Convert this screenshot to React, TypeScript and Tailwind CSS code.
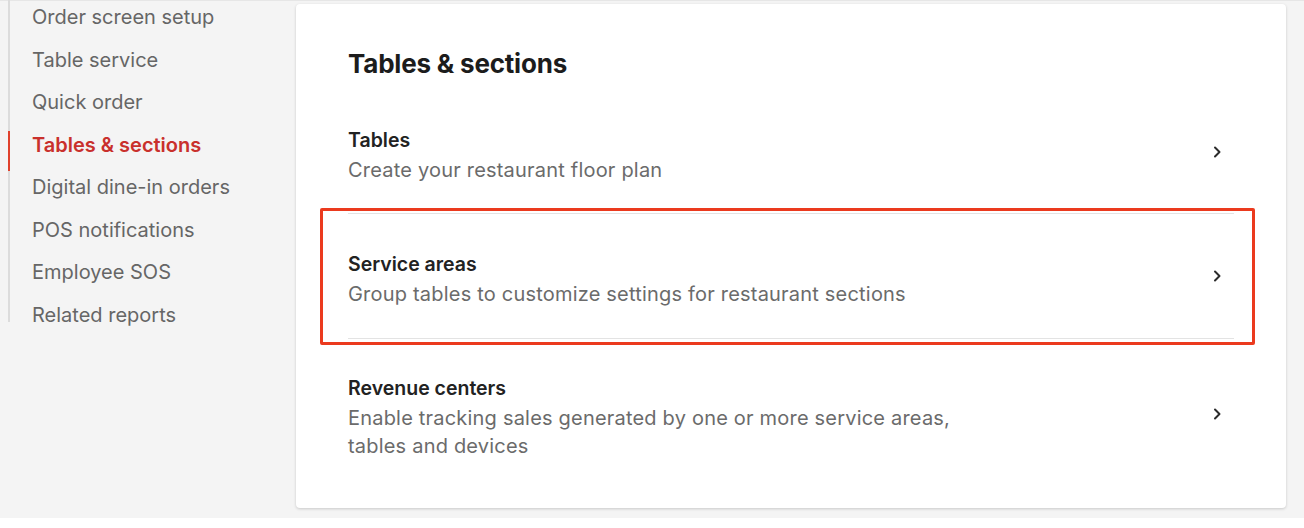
import React from 'react';

const navItems = [
  'Order screen setup',
  'Table service',
  'Quick order',
  'Tables & sections',
  'Digital dine-in orders',
  'POS notifications',
  'Employee SOS',
  'Related reports',
];

const rows = [
  { title: 'Tables', desc: ['Create your restaurant floor plan'] },
  { title: 'Service areas', desc: ['Group tables to customize settings for restaurant sections'], marked: true },
  {
    title: 'Revenue centers',
    desc: ['Enable tracking sales generated by one or more service areas,', 'tables and devices'],
  },
];

function Chevron() {
  return (
    <svg width="16" height="16" viewBox="0 0 16 16" fill="none" className="mr-[9px] mb-[6px] shrink-0">
      <path d="M6 3.5 L10.5 8 L6 12.5" stroke="#2b2b2b" strokeWidth="2" strokeLinecap="round" strokeLinejoin="round" />
    </svg>
  );
}

export default function App() {
  return (
    <div className="w-[1304px] h-[528px] bg-white overflow-hidden font-['Inter',sans-serif]">
      <div className="h-[518px] bg-[#f4f4f4] flex border-t border-[#e6e6e6]">
        <nav className="w-[296px] shrink-0 pl-2">
          <ul className="h-[326px] border-l-2 border-[#dcdcdc] -mt-[5px]">
            {navItems.map((item) => {
              const active = item === 'Tables & sections';
              return (
                <li key={item} className="relative h-[42.5px] flex items-center pl-[22px]">
                  {active && <span className="absolute -left-[2px] top-[7px] h-[40px] w-[2px] bg-[#e0412c]" />}
                  <span
                    className={
                      active
                        ? 'text-[20px] font-semibold text-[#c9302c]'
                        : 'text-[20px] text-[#666666]'
                    }
                  >
                    {item}
                  </span>
                </li>
              );
            })}
          </ul>
        </nav>

        <div className="flex-1 mr-[18px] mt-[3px] mb-[10px] bg-white rounded-[4px] shadow-[0_1px_3px_rgba(0,0,0,0.18)] pl-[52px] pr-[52px] pt-[44px]">
          <h1 className="text-[26px] leading-[32px] font-bold text-[#1c1c1c] tracking-[-0.2px]">Tables &amp; sections</h1>
          <div className="mt-[10px]">
            {rows.map((row, i) => (
              <div
                key={row.title}
                className={
                  'relative flex items-center justify-between ' +
                  (i === 0 ? 'pt-[36px] pb-[29px] border-b border-[#e3e3e3]' : '') +
                  (i === 1 ? 'pt-[36px] pb-[30px] border-b border-[#e3e3e3]' : '') +
                  (i === 2 ? 'pt-[35px]' : '')
                }
              >
                {row.marked && (
                  <span className="absolute -left-[28px] -right-[21px] -top-[6px] -bottom-[7px] border-[3px] border-[#eb3a1e] rounded-[2px] pointer-events-none" />
                )}
                <div>
                  <div className="text-[19.5px] leading-[28px] font-semibold text-[#222222]">{row.title}</div>
                  {row.desc.map((line, j) => (
                    <div
                      key={line}
                      className={
                        'text-[20px] leading-[28px] tracking-[0.2px] text-[#6b6b6b] ' + (j === 0 ? 'mt-[2px]' : '')
                      }
                    >
                      {line}
                    </div>
                  ))}
                </div>
                <Chevron />
              </div>
            ))}
          </div>
        </div>
      </div>
    </div>
  );
}
